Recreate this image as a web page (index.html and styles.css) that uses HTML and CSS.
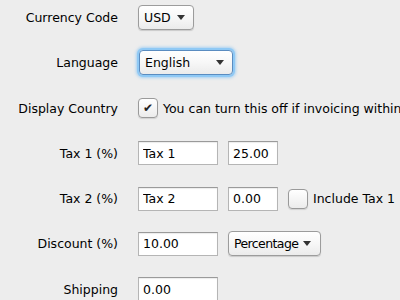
FILE: index.html
```html
<!DOCTYPE html>
<html lang="en">
<head>
  <meta charset="UTF-8" />
  <title>Invoice Settings</title>
  <link rel="stylesheet" href="styles.css">
</head>
<body>
  <form class="settings">
    <div class="label">Currency Code</div>
    <div class="field">
      <button type="button" class="popup popup-usd">USD<span class="caret"></span></button>
    </div>

    <div class="label">Language</div>
    <div class="field">
      <button type="button" class="popup popup-lang focused">English<span class="caret"></span></button>
    </div>

    <div class="label">Display Country</div>
    <div class="field">
      <span class="check checked">&#10004;</span>
      <span class="note">You can turn this off if invoicing within your country</span>
    </div>

    <div class="label">Tax 1 (%)</div>
    <div class="field">
      <input class="text wide" type="text" value="Tax 1">
      <input class="text narrow" type="text" value="25.00">
    </div>

    <div class="label">Tax 2 (%)</div>
    <div class="field">
      <input class="text wide" type="text" value="Tax 2">
      <input class="text narrow" type="text" value="0.00">
      <span class="check"></span>
      <span class="note">Include Tax 1</span>
    </div>

    <div class="label">Discount (%)</div>
    <div class="field">
      <input class="text wide" type="text" value="10.00">
      <button type="button" class="popup popup-pct">Percentage<span class="caret"></span></button>
    </div>

    <div class="label">Shipping</div>
    <div class="field">
      <input class="text wide" type="text" value="0.00">
    </div>
  </form>
</body>
</html>
```

FILE: styles.css
```css
html, body {
  margin: 0;
  height: 100%;
  overflow: hidden;
}

body {
  background: #ededed;
  color: #000;
  font-family: "DejaVu Sans", sans-serif;
  font-size: 12.5px;
}

.settings {
  display: grid;
  grid-template-columns: 118px auto;
  grid-auto-rows: 25px;
  column-gap: 20px;
  row-gap: 20.25px;
  padding-top: 5px;
}

.label {
  display: flex;
  align-items: center;
  justify-content: flex-end;
  white-space: nowrap;
}

.field {
  display: flex;
  align-items: center;
  gap: 10px;
  white-space: nowrap;
}

.popup {
  display: flex;
  align-items: center;
  justify-content: space-between;
  height: 25px;
  padding: 0 8px 0 5px;
  border: 1px solid #9c9c9c;
  border-radius: 4px;
  background: linear-gradient(#ffffff, #f7f7f7 50%, #ebebeb);
  box-shadow: 0 1px 1px rgba(0, 0, 0, 0.15);
  font-family: inherit;
  font-size: inherit;
  color: #000;
}

.popup-usd {
  width: 56px;
}

.popup-lang {
  width: 94px;
  margin-left: 1px;
}

.popup-pct {
  width: 93px;
  padding-right: 9px;
  letter-spacing: -0.6px;
}

.focused {
  border-color: #5a8cc0;
  box-shadow: 0 0 0 2px #8fc9f5, 0 0 3px 3px rgba(120, 190, 245, 0.6);
}

.caret {
  flex-shrink: 0;
  width: 0;
  height: 0;
  border-left: 4px solid transparent;
  border-right: 4px solid transparent;
  border-top: 5px solid #333;
}

.text {
  box-sizing: border-box;
  height: 24px;
  padding: 0 4px;
  border: 1px solid #b5b5b5;
  border-top-color: #9a9a9a;
  background: #fff;
  box-shadow: inset 0 1px 1px rgba(0, 0, 0, 0.08);
  font-family: inherit;
  font-size: inherit;
  color: #000;
  border-radius: 0;
}

.wide {
  width: 80px;
}

.narrow {
  width: 50px;
}

.check {
  box-sizing: border-box;
  width: 20px;
  height: 20px;
  display: flex;
  align-items: center;
  justify-content: center;
  border: 1px solid #9a9a9a;
  border-radius: 4px;
  background: linear-gradient(#ffffff, #ececec);
  box-shadow: 0 1px 1px rgba(0, 0, 0, 0.12);
  font-size: 12px;
  color: #222;
}

.check + .note {
  margin-left: -5px;
}
```
